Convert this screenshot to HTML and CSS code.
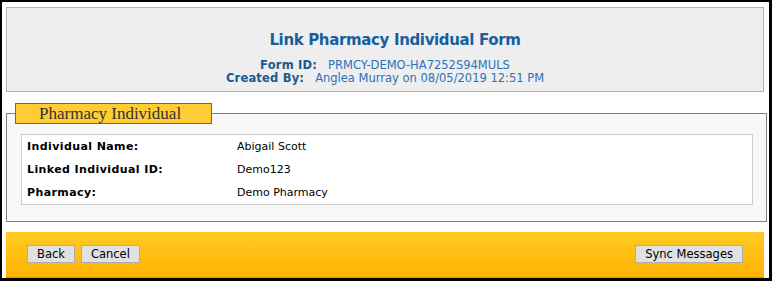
FILE: index.html
```html
<!DOCTYPE html>
<html>
<head>
<meta charset="utf-8">
<link rel="stylesheet" href="styles.css">
</head>
<body>
<div class="frame">
  <div class="header">
    <h1 class="title">Link Pharmacy Individual Form</h1>
    <div class="meta"><span class="meta-label">Form ID:</span>&nbsp;&nbsp; <span class="meta-value">PRMCY-DEMO-HA7252S94MULS</span></div>
    <div class="meta"><span class="meta-label">Created By:</span>&nbsp;&nbsp; <span class="meta-value">Anglea Murray on 08/05/2019 12:51 PM</span></div>
  </div>
  <fieldset class="section">
    <legend class="section-legend">Pharmacy Individual</legend>
    <table class="details">
      <tr><td class="lbl">Individual Name:</td><td class="val">Abigail Scott</td></tr>
      <tr><td class="lbl">Linked Individual ID:</td><td class="val">Demo123</td></tr>
      <tr><td class="lbl">Pharmacy:</td><td class="val">Demo Pharmacy</td></tr>
    </table>
  </fieldset>
  <div class="footer">
    <div class="btn-group">
      <button class="btn">Back</button>
      <button class="btn">Cancel</button>
    </div>
    <button class="btn">Sync Messages</button>
  </div>
</div>
</body>
</html>
```

FILE: styles.css
```css
html, body {
  margin: 0;
  padding: 0;
  background: #ffffff;
}
body {
  font-family: "DejaVu Sans", Verdana, sans-serif;
  font-size: 11px;
  color: #000;
}
.frame {
  box-sizing: border-box;
  width: 772px;
  height: 281px;
  border-style: solid;
  border-color: #000;
  border-width: 2px 3px 3px 2px;
  padding: 5px 0 0 4px;
  background: #fff;
}
.header {
  box-sizing: border-box;
  width: 758px;
  height: 85px;
  background: #eeeeee;
  border: 1px solid #a7b7c2;
  text-align: center;
  padding-top: 22px;
}
.title {
  margin: 0 0 9px 0;
  padding-left: 20px;
  font-size: 15px;
  letter-spacing: -0.35px;
  font-weight: bold;
  color: #165f9d;
  line-height: 20px;
}
.meta {
  line-height: 13px;
  font-size: 11.5px;
}
.meta-label {
  font-weight: bold;
  color: #1b5a8e;
  letter-spacing: 0.2px;
}
.meta-value {
  color: #2a73b8;
}
.section {
  box-sizing: border-box;
  width: 761px;
  margin: 11px 0 0 0;
  padding: 10px 13px 16px 14px;
  border: 1px solid #7f7f7f;
  background: #f8f8f8;
}
.section-legend {
  box-sizing: border-box;
  width: 197px;
  height: 21px;
  margin-left: -6px;
  padding: 0 0 0 23px;
  background: #ffcc33;
  border: 1px solid #666666;
  font-family: "Liberation Serif", "DejaVu Serif", serif;
  font-size: 17px;
  line-height: 19px;
  color: #333;
}
.details {
  width: 100%;
  border-collapse: separate;
  border-spacing: 0;
  border: 1px solid #cccccc;
  background: #fff;
}
.details td {
  height: 23px;
  padding: 0 5px;
  vertical-align: middle;
}
.details .lbl {
  width: 200px;
  font-weight: bold;
  letter-spacing: 0.4px;
}
.footer {
  box-sizing: border-box;
  width: 758px;
  height: 46px;
  margin-top: 10px;
  padding: 13px 21px 0 21px;
  background: linear-gradient(#ffcb25, #ffb200);
  border-bottom: 1px solid #9a9a9a;
  display: flex;
  justify-content: space-between;
  align-items: flex-start;
}
.btn-group {
  display: flex;
  gap: 6px;
}
.btn {
  box-sizing: border-box;
  height: 18px;
  padding: 0 9px;
  background: #e1e1e1;
  border: 1px solid #adadad;
  font-family: "DejaVu Sans", Verdana, sans-serif;
  font-size: 11.5px;
  line-height: 16px;
  color: #000;
}
```
